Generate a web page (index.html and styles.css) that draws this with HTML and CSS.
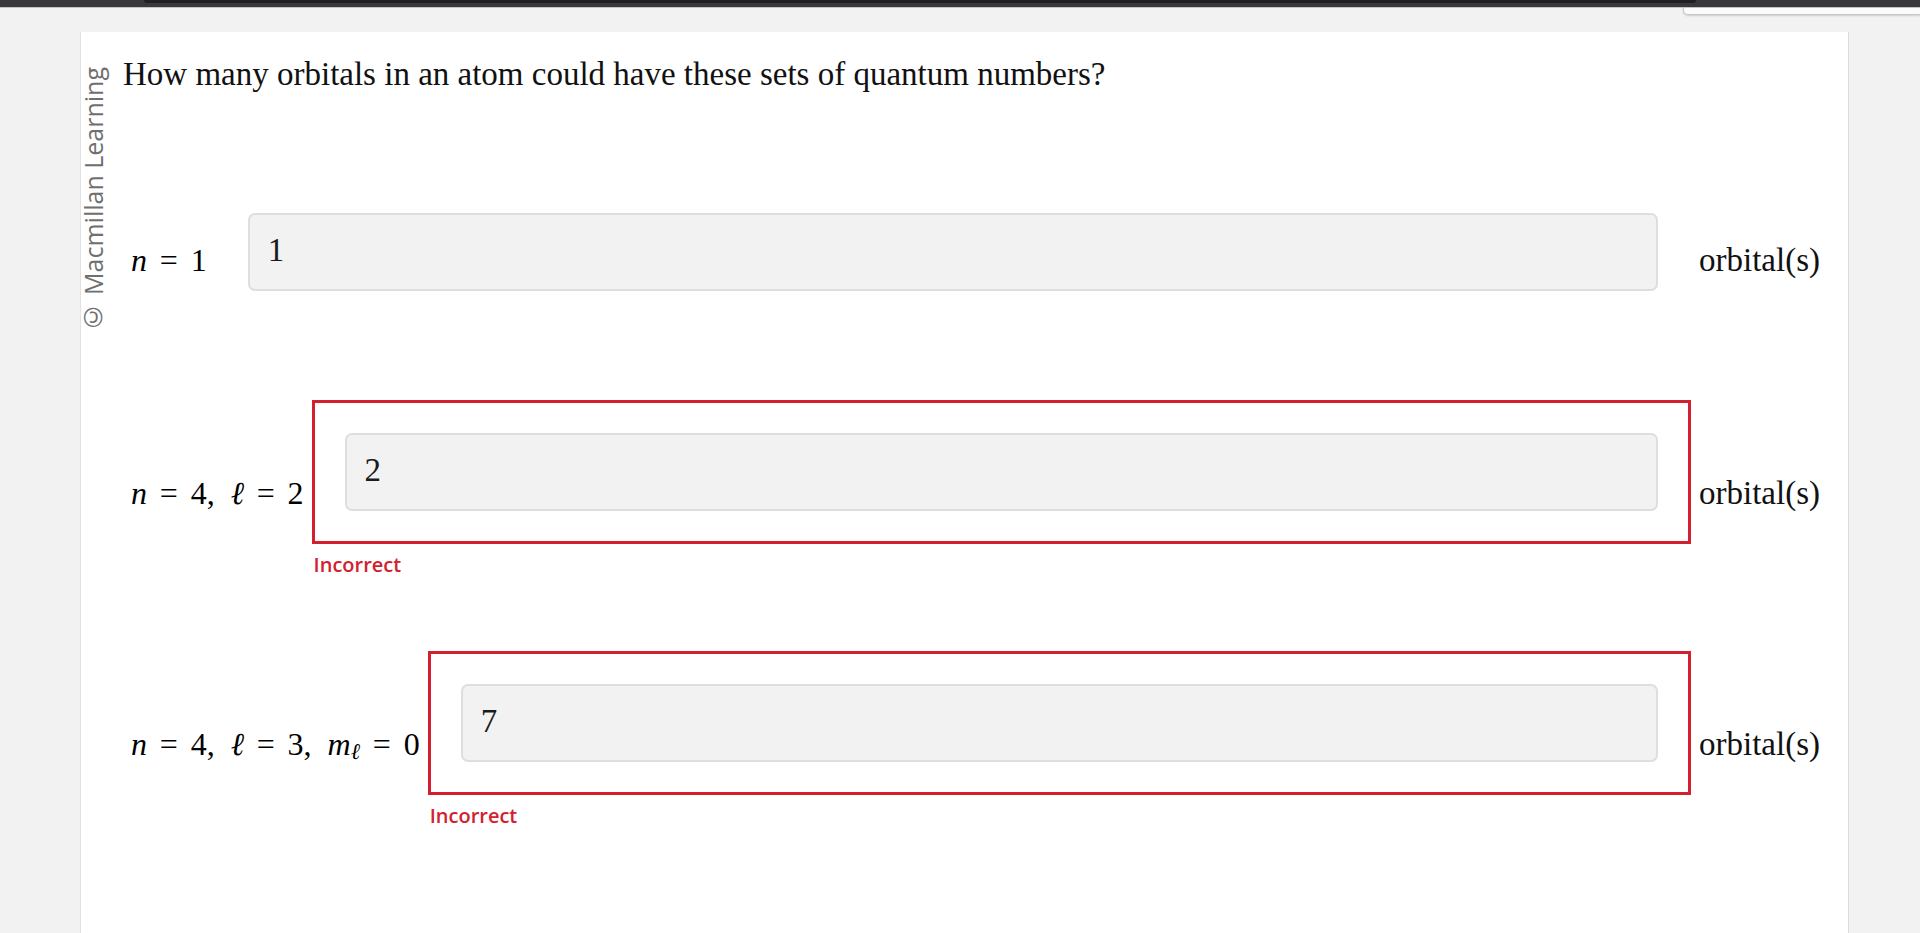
FILE: index.html
```html
<!DOCTYPE html>
<html lang="en">
<head>
  <meta charset="UTF-8" />
  <meta name="viewport" content="width=device-width, initial-scale=1.0"/>
  <title>Quantum numbers</title>
  <link rel="stylesheet" href="styles.css">
</head>
<body>
  <div class="topbar"><div class="topbar-inner"></div></div>
  <div class="strip"><div class="tab"></div></div>

  <div class="card">
    <div class="copyright">© Macmillan Learning</div>

    <div class="content">
      <h1>How many orbitals in an atom could have these sets of quantum numbers?</h1>

      <div class="rows">
        <div class="row row-plain">
          <span class="math"><i>n</i><span class="rel">=</span>1</span>
          <div class="answer">
            <div class="answer-box"><input type="text" value="1" /></div>
          </div>
          <span class="unit">orbital(s)</span>
        </div>

        <div class="row is-wrong">
          <span class="math"><i>n</i><span class="rel">=</span>4<span class="comma">,</span><i>ℓ</i><span class="rel">=</span>2</span>
          <div class="answer">
            <div class="answer-box"><input type="text" value="2" /></div>
            <div class="feedback">Incorrect</div>
          </div>
          <span class="unit">orbital(s)</span>
        </div>

        <div class="row is-wrong">
          <span class="math"><i>n</i><span class="rel">=</span>4<span class="comma">,</span><i>ℓ</i><span class="rel">=</span>3<span class="comma">,</span><i>m</i><sub><i>ℓ</i></sub><span class="rel">=</span>0</span>
          <div class="answer">
            <div class="answer-box"><input type="text" value="7" /></div>
            <div class="feedback">Incorrect</div>
          </div>
          <span class="unit">orbital(s)</span>
        </div>
      </div>
    </div>
  </div>
</body>
</html>
```

FILE: styles.css
```css
body {
  margin: 0;
  background: #f2f2f2;
  font-family: "Liberation Serif", "Times New Roman", serif;
  color: #111;
  overflow: hidden;
}
.topbar {
  height: 7px;
  background: #38393d;
  border-bottom: 1px solid #c4c4c4;
}
.topbar-inner {
  margin-left: 144px;
  width: 1552px;
  height: 3px;
  background: #1f2023;
  border-radius: 0 0 8px 8px;
}
.strip {
  height: 24px;
  display: flex;
  justify-content: flex-end;
}
.tab {
  width: 236px;
  height: 6px;
  background: #fbfbfb;
  border-left: 1px solid #c6c6c6;
  border-bottom: 1px solid #c6c6c6;
  border-bottom-left-radius: 5px;
  box-shadow: 0 1px 2px rgba(0,0,0,0.15);
}
.card {
  margin-left: 80px;
  width: 1769px;
  min-height: 901px;
  box-sizing: border-box;
  background: #fff;
  border-left: 1px solid #e2e2e2;
  border-right: 1px solid #dcdcdc;
  padding-right: 28px;
  display: flex;
}
.copyright {
  writing-mode: vertical-rl;
  transform: rotate(180deg);
  align-self: flex-start;
  margin-top: 35px;
  font-family: "Open Sans", sans-serif;
  font-size: 25px;
  line-height: 25px;
  color: #6f6f6f;
  white-space: nowrap;
}
.content {
  flex: 1;
  margin-left: 17px;
}
h1 {
  margin: 23px 0 0;
  font-size: 33px;
  line-height: 38px;
  font-weight: normal;
}
.rows {
  margin-top: 87px;
  padding-left: 8px;
  display: flex;
  flex-direction: column;
  gap: 76px;
}
.row {
  display: flex;
  align-items: flex-start;
  gap: 8px;
}
.math, .unit {
  line-height: 40px;
  margin-top: 73px;
  white-space: nowrap;
}
.row-plain .math, .row-plain .unit {
  margin-top: 60px;
}
.math {
  font-size: 32px;
  color: #000;
}
.math i {
  font-style: italic;
}
.math sub {
  font-size: 0.7em;
  line-height: 0;
  vertical-align: -0.18em;
}
.rel {
  margin: 0 0.4em;
}
.comma {
  margin-right: 0.5em;
}
.unit {
  font-size: 33px;
}
.answer {
  flex: 1;
  min-width: 0;
}
.answer-box {
  border: 3px solid transparent;
  padding: 30px;
}
.is-wrong .answer-box {
  border-color: #d3202f;
}
.answer-box input {
  display: block;
  width: 100%;
  height: 78px;
  box-sizing: border-box;
  border: 2px solid #dedede;
  border-radius: 7px;
  background: #f2f2f2;
  padding: 0 18px 4px;
  font-family: "Liberation Serif", serif;
  font-size: 33px;
  color: #1a1a1a;
  outline: none;
}
.feedback {
  margin-top: 10px;
  padding-left: 2px;
  font-family: "Open Sans", sans-serif;
  font-weight: 600;
  font-size: 20px;
  line-height: 21px;
  color: #d3202f;
}
```
